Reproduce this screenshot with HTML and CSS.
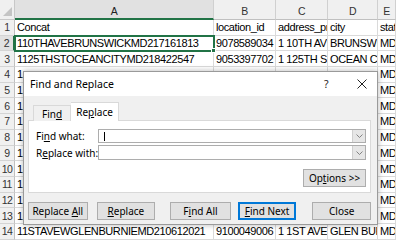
FILE: index.html
```html
<!DOCTYPE html>
<html>
<head>
<meta charset="utf-8">
<link rel="stylesheet" href="styles.css">
</head>
<body>
<div class="sheet">
  <div class="corner"><span class="tri"></span></div>
  <div class="ch sel">A</div>
  <div class="ch">B</div>
  <div class="ch">C</div>
  <div class="ch">D</div>
  <div class="ch">E</div>

  <div class="rh">1</div><div class="c">Concat</div><div class="c">location_id</div><div class="c">address_primary</div><div class="c">city</div><div class="c">state</div>
  <div class="rh rsel">2</div><div class="c active">110THAVEBRUNSWICKMD217161813<span class="handle"></span></div><div class="c">9078589034</div><div class="c">1 10TH AVE</div><div class="c">BRUNSWICK</div><div class="c">MD</div>
  <div class="rh">3</div><div class="c">1125THSTOCEANCITYMD218422547</div><div class="c">9053397702</div><div class="c">1 125TH ST</div><div class="c">OCEAN CITY</div><div class="c">MD</div>
  <div class="rh">4</div><div class="c">1</div><div class="c"></div><div class="c"></div><div class="c"></div><div class="c">MD</div>
  <div class="rh">5</div><div class="c">1</div><div class="c"></div><div class="c"></div><div class="c"></div><div class="c">MD</div>
  <div class="rh">6</div><div class="c">1</div><div class="c"></div><div class="c"></div><div class="c"></div><div class="c">MD</div>
  <div class="rh">7</div><div class="c">1</div><div class="c"></div><div class="c"></div><div class="c"></div><div class="c">MD</div>
  <div class="rh">8</div><div class="c">1</div><div class="c"></div><div class="c"></div><div class="c"></div><div class="c">MD</div>
  <div class="rh">9</div><div class="c">1</div><div class="c"></div><div class="c"></div><div class="c"></div><div class="c">MD</div>
  <div class="rh">10</div><div class="c">1</div><div class="c"></div><div class="c"></div><div class="c"></div><div class="c">MD</div>
  <div class="rh">11</div><div class="c">1</div><div class="c"></div><div class="c"></div><div class="c"></div><div class="c">MD</div>
  <div class="rh">12</div><div class="c">1</div><div class="c"></div><div class="c"></div><div class="c"></div><div class="c">MD</div>
  <div class="rh">13</div><div class="c">1</div><div class="c"></div><div class="c"></div><div class="c"></div><div class="c">MD</div>
  <div class="rh">14</div><div class="c">11STAVEWGLENBURNIEMD210612021</div><div class="c">9100049006</div><div class="c">1 1ST AVE</div><div class="c">GLEN BURNIE</div><div class="c">MD</div>
</div>

<div class="dialog">
  <div class="titlebar">
    <span class="title">Find and Replace</span>
    <span class="help">?</span>
    <svg class="close-x" width="10" height="10" viewBox="0 0 10 10"><path d="M0.5 0.5 L9.5 9.5 M9.5 0.5 L0.5 9.5" stroke="#222" stroke-width="1"/></svg>
  </div>
  <div class="body">
    <div class="tabs">
      <div class="tab"><span>Fin<u>d</u></span></div>
      <div class="tab on"><span>Re<u>p</u>lace</span></div>
    </div>
    <div class="panel">
      <div class="field">
        <label>Fi<u>n</u>d what:</label>
        <div class="combo"><span class="caret"></span><span class="drop"><svg width="7" height="4" viewBox="0 0 7 4"><path d="M0.5 0.5 L3.5 3.5 L6.5 0.5" fill="none" stroke="#777" stroke-width="0.9"/></svg></span></div>
      </div>
      <div class="field">
        <label>R<u>e</u>place with:</label>
        <div class="combo tall"><span class="drop"><svg width="7" height="4" viewBox="0 0 7 4"><path d="M0.5 0.5 L3.5 3.5 L6.5 0.5" fill="none" stroke="#777" stroke-width="0.9"/></svg></span></div>
      </div>
      <div class="optrow"><div class="btn opt"><span>Op<u>t</u>ions &gt;&gt;</span></div></div>
    </div>
    <div class="buttons">
      <div class="btn w60"><span>Replace <u>A</u>ll</span></div>
      <div class="btn w59 g9"><span><u>R</u>eplace</span></div>
      <div class="btn w61 g15"><span>F<u>i</u>nd All</span></div>
      <div class="btn w59 g7 primary"><span><u>F</u>ind Next</span></div>
      <div class="btn w59 g16"><span>Close</span></div>
    </div>
  </div>
</div>
</body>
</html>
```

FILE: styles.css
```css
html, body {
  margin: 0;
  padding: 0;
  width: 396px;
  height: 240px;
  overflow: hidden;
  background: #fff;
}

.sheet {
  display: grid;
  grid-template-columns: 15px 199px 62px 52px 50px 18px;
  grid-template-rows: 20px repeat(14, 15.7px);
  font-family: "Liberation Sans", Arial, sans-serif;
  font-size: 11px;
  letter-spacing: -0.4px;
  color: #000;
}

.corner {
  position: relative;
  background: #f0f0f0;
  border-right: 1px solid #c8c8c8;
  border-bottom: 1px solid #c8c8c8;
  box-sizing: border-box;
}
.corner .tri {
  position: absolute;
  right: 2px;
  bottom: 3px;
  width: 0;
  height: 0;
  border-left: 9px solid transparent;
  border-bottom: 9px solid #c4c4c4;
}

.ch {
  background: #f0f0f0;
  border-right: 1px solid #d0d0d0;
  border-bottom: 1px solid #c0c0c0;
  box-sizing: border-box;
  display: flex;
  align-items: center;
  justify-content: center;
  color: #333;
  font-size: 10.5px;
  padding-top: 3px;
}
.ch.sel {
  background: #e1e1e1;
  border-bottom: 2px solid #217346;
  color: #222;
}

.rh {
  background: #f0f0f0;
  border-right: 1px solid #c0c0c0;
  border-bottom: 1px solid #d4d4d4;
  box-sizing: border-box;
  display: flex;
  align-items: center;
  justify-content: center;
  color: #333;
  font-size: 10.5px;
  letter-spacing: -0.5px;
}
.rh.rsel {
  background: #e1e1e1;
  border-right: 2px solid #217346;
}

.c {
  border-right: 1px solid #dadada;
  border-bottom: 1px solid #dadada;
  box-sizing: border-box;
  display: flex;
  align-items: center;
  padding-left: 2px;
  white-space: nowrap;
  overflow: hidden;
  position: relative;
}
.c.active {
  overflow: visible;
  outline: 2px solid #217346;
  outline-offset: -1px;
  z-index: 1;
}
.c.active .handle {
  position: absolute;
  right: -3px;
  bottom: -3px;
  width: 5px;
  height: 5px;
  background: #217346;
  border: 1px solid #fff;
  box-sizing: border-box;
}

/* dialog */
.dialog {
  position: absolute;
  left: 23px;
  top: 71px;
  width: 355px;
  height: 154px;
  box-sizing: border-box;
  background: #f0f0f0;
  border: 1px solid #9a9a9a;
  box-shadow: 0 0 6px rgba(0,0,0,0.28);
  font-family: "Noto Sans", "Open Sans", sans-serif;
  font-size: 10px;
  color: #000;
  display: flex;
  flex-direction: column;
  z-index: 5;
}

.titlebar {
  height: 24px;
  background: #fff;
  display: flex;
  align-items: center;
  padding-left: 6px;
  flex: none;
}
.title {
  font-size: 10.5px;
  flex: 1;
}
.help {
  font-size: 10.5px;
  width: 10px;
  margin-right: 23px;
  color: #222;
}
.close-x {
  margin-right: 10px;
}

.body {
  flex: 1;
  display: flex;
  flex-direction: column;
  padding: 6px 6px 0 4px;
}

.tabs {
  display: flex;
  align-items: flex-end;
  padding-left: 5px;
  height: 19px;
  position: relative;
  z-index: 2;
  margin-bottom: -1px;
}
.tab {
  width: 38px;
  height: 16px;
  box-sizing: border-box;
  border: 1px solid #d9d9d9;
  border-bottom: none;
  background: #f0f0f0;
  display: flex;
  align-items: center;
  justify-content: center;
  font-size: 10px;
}
.tab.on {
  width: 48px;
  height: 19px;
  background: #fff;
  border-left: none;
  padding-bottom: 1px;
}

.panel {
  background: #fff;
  border: 1px solid #d9d9d9;
  padding: 8px 4px 5px 7px;
  display: flex;
  flex-direction: column;
  gap: 2px;
}

.field {
  display: flex;
  align-items: center;
}
.field label {
  width: 62px;
  font-size: 10px;
  white-space: nowrap;
}
.combo {
  flex: 1;
  height: 14px;
  box-sizing: border-box;
  border: 1px solid #adadad;
  background: #fff;
  display: flex;
  align-items: center;
  justify-content: space-between;
}
.combo.tall {
  height: 15px;
}
.caret {
  width: 1px;
  height: 9px;
  background: #000;
  margin-left: 5px;
}
.drop {
  margin-left: auto;
  width: 13px;
  height: 100%;
  background: #e6e6e6;
  border-left: 1px solid #cfcfcf;
  box-sizing: border-box;
  display: flex;
  align-items: center;
  justify-content: center;
}

.optrow {
  display: flex;
  justify-content: flex-end;
  margin-top: 7px;
}

.btn {
  height: 18px;
  box-sizing: border-box;
  border: 1px solid #adadad;
  background: #e1e1e1;
  display: flex;
  align-items: center;
  justify-content: center;
  font-size: 10px;
  white-space: nowrap;
}
.btn.opt {
  width: 63px;
}
.btn.primary {
  border: 2px solid #0078d7;
}

.buttons {
  display: flex;
  margin-top: 9px;
}
.w59 { width: 59px; }
.w60 { width: 60px; }
.w61 { width: 61px; }
.g7 { margin-left: 7px; }
.g9 { margin-left: 9px; }
.g15 { margin-left: 15px; }
.g16 { margin-left: 16px; }
```
